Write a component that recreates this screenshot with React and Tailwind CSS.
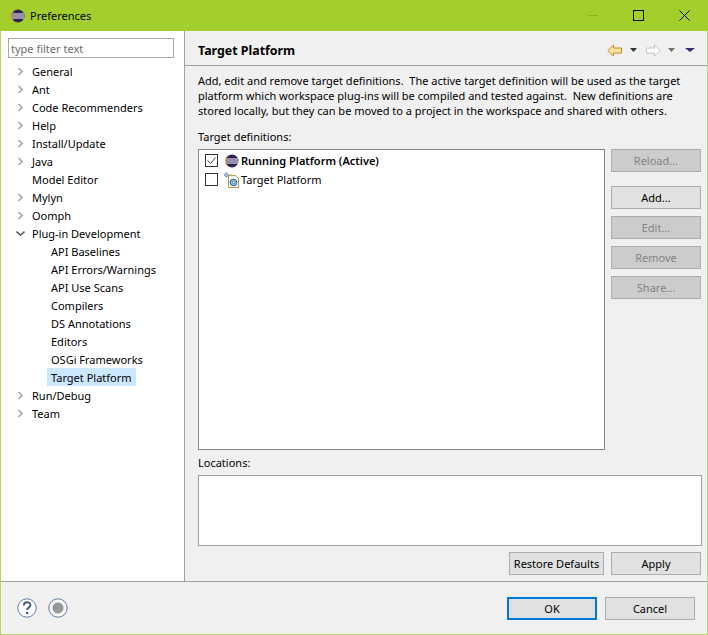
import React from 'react';

const treeItems = [
  { label: 'General', arrow: 'right' },
  { label: 'Ant', arrow: 'right' },
  { label: 'Code Recommenders', arrow: 'right' },
  { label: 'Help', arrow: 'right' },
  { label: 'Install/Update', arrow: 'right' },
  { label: 'Java', arrow: 'right' },
  { label: 'Model Editor' },
  { label: 'Mylyn', arrow: 'right' },
  { label: 'Oomph', arrow: 'right' },
  { label: 'Plug-in Development', arrow: 'down' },
  { label: 'API Baselines', child: true },
  { label: 'API Errors/Warnings', child: true },
  { label: 'API Use Scans', child: true },
  { label: 'Compilers', child: true },
  { label: 'DS Annotations', child: true },
  { label: 'Editors', child: true },
  { label: 'OSGi Frameworks', child: true },
  { label: 'Target Platform', child: true, selected: true },
  { label: 'Run/Debug', arrow: 'right' },
  { label: 'Team', arrow: 'right' },
];

const EclipseIcon = () => (
  <svg width="14" height="14" viewBox="0 0 14 14" className="shrink-0">
    <circle cx="7" cy="7" r="6.5" fill="#2c2255" />
    <path d="M1 5h12M.8 7h12.4M1 9h12" stroke="#fff" strokeWidth="1" />
    <path d="M3 1.5A6.5 6.5 0 0 0 3 12.5" fill="none" stroke="#f7941e" strokeWidth="0.8" />
  </svg>
);

const Arrow = ({ dir }) => (
  <svg width="9" height="9" viewBox="0 0 9 9" className="shrink-0">
    {dir === 'right' ? (
      <path d="M2.5 1l3.5 3.5L2.5 8" fill="none" stroke="#a6a6a6" strokeWidth="1.6" />
    ) : (
      <path d="M.5 2.5L4.5 6l4-3.5" fill="none" stroke="#595959" strokeWidth="1.6" />
    )}
  </svg>
);

const NavArrow = ({ flip, fill, stroke }) => (
  <svg width="15" height="13" viewBox="0 0 15 13" className={flip ? 'shrink-0 -scale-x-100' : 'shrink-0'}>
    <path d="M.8 6.5L6.5 1v3h8v5h-8v3z" fill={fill} stroke={stroke} strokeWidth="1" />
  </svg>
);

const Caret = ({ color, wide }) => (
  <svg width={wide ? 10 : 7} height="4" viewBox={wide ? '0 0 10 4' : '0 0 7 4'} className="shrink-0">
    <path d={wide ? 'M0 0h10L5 4z' : 'M0 0h7L3.5 4z'} fill={color} />
  </svg>
);

const Button = ({ children, disabled, primary, className = '' }) => (
  <button
    className={`h-[23px] w-[90px] whitespace-nowrap text-[11px] leading-none ${
      primary ? 'border-2 border-[#0078d7]' : 'border border-[#adadad]'
    } ${disabled ? 'bg-[#cccccc] text-[#838383]' : 'bg-[#e1e1e1] text-black'} ${className}`}
  >
    {children}
  </button>
);

export default function App() {
  return (
    <div className="flex h-[635px] w-[708px] flex-col overflow-hidden bg-[#f0f0f0] text-[11px] leading-[15px] text-black font-['Noto_Sans',sans-serif]">
      {/* Titlebar */}
      <div className="flex h-[31px] shrink-0 items-center bg-[#a4ce2b] pl-[11px]">
        <EclipseIcon />
        <span className="ml-[5px]">Preferences</span>
        <div className="ml-auto flex h-full items-center">
          <div className="mr-[35px] h-px w-[10px] bg-[#8aae24]" />
          <div className="mr-[35px] h-[11px] w-[11px] border border-black" />
          <svg width="11" height="11" viewBox="0 0 11 11" className="mr-[18px]">
            <path d="M.5.5l10 10M10.5.5l-10 10" stroke="#000" strokeWidth="1" />
          </svg>
        </div>
      </div>

      <div className="flex min-h-0 flex-1 flex-col border-x border-b border-[#b5d85f]">
        <div className="flex h-[551px] shrink-0 border-b border-[#a0a0a0]">
          {/* Sidebar */}
          <div className="w-[184px] shrink-0 border-r border-[#a0a0a0] bg-white pl-[7px] pt-[7px]">
            <div className="flex h-[20px] w-[166px] items-center border border-[#a9a9a9] px-[2px] text-[#6d6d6d]">
              type filter text
            </div>
            <div className="mt-[4px]">
              {treeItems.map((item) => (
                <div key={item.label} className="flex h-[18px] items-center">
                  {item.child ? (
                    <span
                      className={`ml-[39px] flex h-[18px] items-center px-[4px] ${
                        item.selected ? 'bg-[#cce8ff]' : ''
                      }`}
                    >
                      {item.label}
                    </span>
                  ) : (
                    <>
                      <span className="flex w-[24px] justify-center px-[1px]">
                        {item.arrow && <Arrow dir={item.arrow} />}
                      </span>
                      <span>{item.label}</span>
                    </>
                  )}
                </div>
              ))}
            </div>
          </div>

          {/* Main panel */}
          <div className="flex min-w-0 flex-1 flex-col">
            <div className="flex h-[35px] shrink-0 items-center border-b border-[#a0a0a0] pl-[13px] pr-[12px] pt-[4px]">
              <span className="text-[12.4px] font-bold">Target Platform</span>
              <div className="ml-auto flex items-center">
                <NavArrow fill="#fce2a0" stroke="#c98a1b" />
                <span className="ml-[8px] flex"><Caret color="#333333" /></span>
                <span className="ml-[9px] flex"><NavArrow flip fill="#ffffff" stroke="#c4c4c4" /></span>
                <span className="ml-[7px] flex"><Caret color="#6f6f6f" /></span>
                <span className="ml-[10px] flex"><Caret color="#3d2a6e" wide /></span>
              </div>
            </div>

            <div className="flex min-h-0 flex-1 flex-col pl-[13px] pr-[6px] pt-[7px]">
              <p className="w-[500px] shrink-0">
                Add, edit and remove target definitions.&nbsp; The active target definition will be used as the target
                platform which workspace plug-ins will be compiled and tested against.&nbsp; New definitions are
                stored locally, but they can be moved to a project in the workspace and shared with others.
              </p>
              <div className="mt-[11px] shrink-0">Target definitions:</div>

              <div className="mt-[5px] flex shrink-0 gap-[6px]">
                <div className="h-[301px] w-[407px] border border-[#828790] bg-white px-[6px] pt-[1px]">
                  <div className="flex h-[19px] items-center">
                    <div className="flex h-[13px] w-[13px] items-center justify-center border border-[#333333]">
                      <svg width="11" height="11" viewBox="0 0 11 11">
                        <path d="M1.5 5.5l3 3 5-6" fill="none" stroke="#444" strokeWidth="1" />
                      </svg>
                    </div>
                    <span className="ml-[7px] flex"><EclipseIcon /></span>
                    <span className="ml-[2px] font-semibold">Running Platform (Active)</span>
                  </div>
                  <div className="flex h-[19px] items-center">
                    <div className="h-[13px] w-[13px] border border-[#333333]" />
                    <svg width="16" height="16" viewBox="0 0 16 16" className="ml-[6px] shrink-0">
                      <path d="M4.5 3.5h7l3 3v9h-10z" fill="#fdfaf0" stroke="#b59b5b" />
                      <path d="M0 3l2.5-2.5L5 3 2.5 5.5z" fill="#9dbcdc" stroke="#5b83ad" strokeWidth="0.6" />
                      <path d="M5 3h3" stroke="#d9a441" strokeWidth="1" />
                      <circle cx="9.5" cy="10.5" r="3.4" fill="#8cc0e0" stroke="#2f6b93" />
                      <circle cx="9.5" cy="10.5" r="1.3" fill="#fff" stroke="#2f6b93" strokeWidth="0.7" />
                    </svg>
                    <span className="ml-px">Target Platform</span>
                  </div>
                </div>
                <div className="flex w-[90px] flex-col">
                  <Button disabled>Reload...</Button>
                  <Button className="mt-[14px]">Add...</Button>
                  <Button disabled className="mt-[7px]">Edit...</Button>
                  <Button disabled className="mt-[7px]">Remove</Button>
                  <Button disabled className="mt-[7px]">Share...</Button>
                </div>
              </div>

              <div className="mt-[5px] shrink-0">Locations:</div>
              <div className="mt-[5px] h-[71px] w-[504px] shrink-0 border border-[#a0a0a0] bg-white" />
              <div className="mt-[6px] flex shrink-0 justify-end gap-[7px]">
                <Button className="w-[95px]">Restore Defaults</Button>
                <Button>Apply</Button>
              </div>
            </div>
          </div>
        </div>

        {/* Footer */}
        <div className="flex flex-1 items-center pl-[16px] pr-[12px]">
          <svg width="20" height="20" viewBox="0 0 20 20">
            <circle cx="10" cy="10" r="9.2" fill="#fff" stroke="#5f7a9c" strokeWidth="1" />
            <path d="M6.8 7.5c0-4.2 6.6-4.2 6.6-.4 0 2.6-3.3 2.4-3.3 5" fill="none" stroke="#465f85" strokeWidth="2" />
            <circle cx="10.1" cy="15" r="1.3" fill="#465f85" />
          </svg>
          <svg width="20" height="20" viewBox="0 0 20 20" className="ml-[11px]">
            <circle cx="10" cy="10" r="9.2" fill="#f6f6f6" stroke="#5f7a9c" strokeWidth="1" />
            <circle cx="10" cy="10" r="5" fill="#9a9a9a" stroke="#8a8a8a" />
          </svg>
          <div className="ml-auto flex gap-[8px]">
            <Button primary>OK</Button>
            <Button>Cancel</Button>
          </div>
        </div>
      </div>
    </div>
  );
}
